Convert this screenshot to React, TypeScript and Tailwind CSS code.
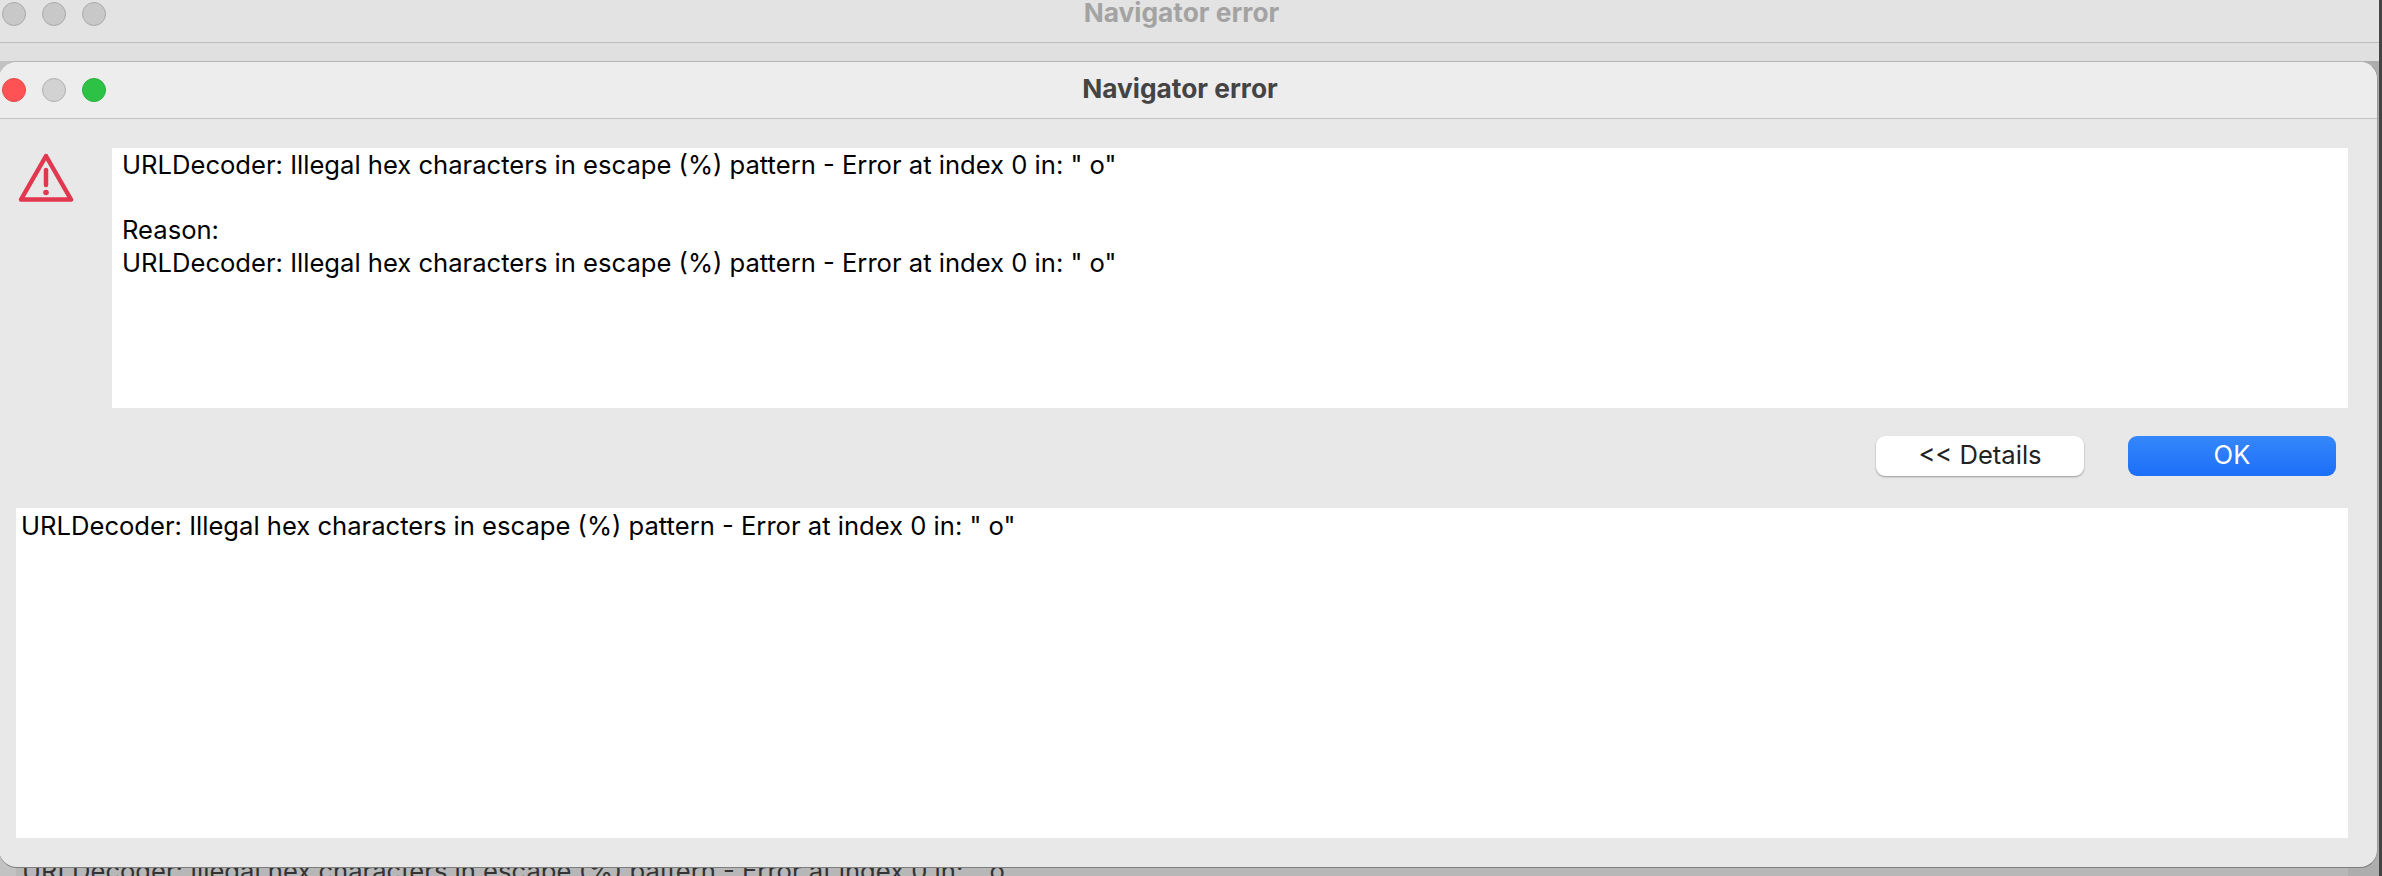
import React from 'react'

const ERROR_TEXT = 'URLDecoder: Illegal hex characters in escape (%) pattern - Error at index 0 in: " o"'

function Light({ className }: { className: string }) {
  return <span className={`block h-6 w-6 rounded-full border ${className}`} />
}

function WarningIcon() {
  return (
    <svg width="56" height="50" viewBox="0 0 56 50" fill="none" className="block">
      <path
        d="M28 3 L53 46.5 L3 46.5 Z"
        stroke="#e2384f"
        strokeWidth="4.5"
        strokeLinejoin="round"
      />
      <path d="M28 17 L28 32" stroke="#e2384f" strokeWidth="4.5" strokeLinecap="round" />
      <circle cx="28" cy="39.5" r="2.8" fill="#e2384f" />
    </svg>
  )
}

export default function App() {
  return (
    <div className="relative h-[876px] w-[2382px] overflow-hidden bg-[#adadad] font-['Inter','Liberation_Sans',sans-serif]">
      {/* window behind the dialog */}
      <div className="h-full w-[2379px]">
        <div className="relative flex h-[43px] justify-center border-b border-[#bdbdbd] bg-[#e3e3e3] pr-[16px] pt-[1px]">
          <div className="absolute left-[2px] top-[2px] flex gap-4">
            <Light className="border-[#aaaaaa] bg-[#c8c8c8]" />
            <Light className="border-[#aaaaaa] bg-[#c8c8c8]" />
            <Light className="border-[#aaaaaa] bg-[#c8c8c8]" />
          </div>
          <span className="text-[26.3px] leading-[24px] font-bold text-[#a3a3a3]">Navigator error</span>
        </div>
        <div className="h-[18px] bg-[#e0e0e0]" />
        <div className="flex bg-[#c2c2c2]">
          <div className="w-[16px] shrink-0" />
          <div className="w-[2332px] shrink-0 bg-[#b7b7b7] pl-[6px] pt-[794px] text-[25.6px] leading-8 whitespace-nowrap text-[#333333]">
            {ERROR_TEXT}
          </div>
          <div className="flex-1 bg-[#adadad]" />
        </div>
      </div>
      <div className="absolute right-0 top-0 h-full w-[3px] bg-[#444444]" />

      {/* active dialog */}
      <div className="absolute left-[-1px] top-[61px] flex h-[807px] w-[2379px] flex-col overflow-hidden rounded-[18px] border-t border-b border-r border-t-[#b5b5b5] border-b-[#7d7d7d] border-r-[#9a9a9a] bg-[#e8e8e8]">
        <div className="relative flex h-[57px] shrink-0 items-center justify-center border-b border-[#c4c4c4] bg-[#ededed] pr-[16px] pb-[2px]">
          <div className="absolute left-[3px] top-[16px] flex gap-4">
            <Light className="border-[#e5484a] bg-[#ff5254]" />
            <Light className="border-[#b0b0b0] bg-[#d2d2d2]" />
            <Light className="border-[#27b13c] bg-[#2dc245]" />
          </div>
          <span className="text-[26.3px] font-bold text-[#444444]">Navigator error</span>
        </div>

        <div className="flex flex-1 flex-col pb-[29px] pl-[17px] pr-[29px] pt-[29px]">
          <div className="flex h-[260px] shrink-0">
            <div className="w-[96px] shrink-0 pl-[2px] pt-[5px]">
              <WarningIcon />
            </div>
            <div className="flex-1 bg-white pl-[10px] pt-[1px] text-[25.6px] leading-[32.5px] text-black">
              <p>{ERROR_TEXT}</p>
              <p className="mt-[32.5px]">Reason:</p>
              <p>{ERROR_TEXT}</p>
            </div>
          </div>

          <div className="flex h-[100px] shrink-0 items-center justify-end gap-[44px] pb-[4px] pr-[12px]">
            <button className="h-10 w-[208px] rounded-[9px] bg-white pb-[2px] text-[25.6px] text-[#222222] shadow-[0_1px_2px_rgba(0,0,0,0.35)]">
              {'<< Details'}
            </button>
            <button className="h-10 w-[208px] rounded-[9px] bg-gradient-to-b from-[#3587fb] to-[#1d6ef8] pb-[2px] text-[25.6px] text-white">
              OK
            </button>
          </div>

          <div className="flex-1 bg-white pl-[5px] pt-[2px] text-[25.6px] leading-8 text-black">
            <p>{ERROR_TEXT}</p>
          </div>
        </div>
      </div>
    </div>
  )
}
